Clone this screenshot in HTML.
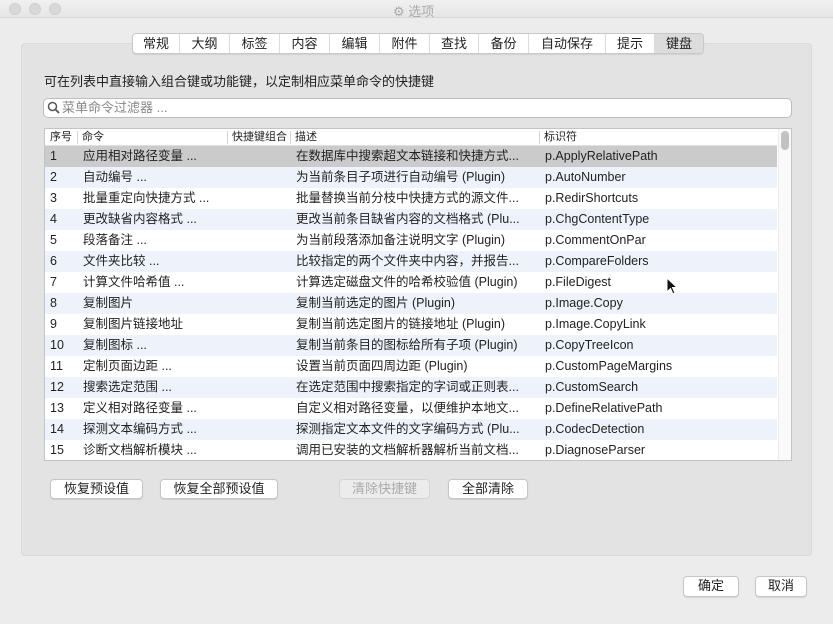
<!DOCTYPE html>
<html><head><meta charset="utf-8"><style>
*{box-sizing:border-box;margin:0;padding:0}
body{width:833px;height:624px;background:#ececec;font-family:"Liberation Sans","Noto Sans CJK SC",sans-serif;font-size:12.5px;color:#222;position:relative;overflow:hidden}
.abs{position:absolute}
.title{left:0;top:0;width:833px;height:18px;background:linear-gradient(#f0f0f0,#e6e6e6);border-bottom:1px solid #d6d6d6}
.dot{width:12px;height:12px;border-radius:50%;background:#d8d8d8;border:1px solid #cfcfcf;top:3px}
.group{left:21px;top:43px;width:791px;height:513px;background:#e3e3e3;border:1px solid #dadada;border-radius:4px}
.tabs{left:132px;top:33px;height:21px;display:flex;background:#fff;border:1px solid #c8c8c8;border-radius:4px;overflow:hidden;box-shadow:0 1px 1px rgba(0,0,0,.08)}
.tabs div{height:19px;line-height:19px;text-align:center;border-right:1px solid #dcdcdc;font-size:13px}
.tabs div:last-child{border-right:none;background:#dcdcdc}
.search{left:43px;top:98px;width:749px;height:20px;background:#fff;border:1px solid #bdbdbd;border-radius:5px;color:#888;font-size:13px;line-height:18px;padding-left:18px}
.table{left:44px;top:128px;width:748px;height:333px;background:#fff;border:1px solid #c4c4c4;overflow:hidden}
.hdr{position:absolute;left:0;top:0;width:732px;height:17px;font-size:11px;line-height:17px;border-bottom:1px solid #e0e0e0}
.hdr span{position:absolute;top:0}
.sep{position:absolute;top:2px;width:1px;height:13px;background:#d4d4d4}
.row{position:absolute;left:0;width:732px;height:21px;line-height:21px;font-size:12.5px}
.row span{position:absolute;top:0;white-space:nowrap}
.sb{left:733px;top:0;width:14px;height:333px;background:#fafafa;border-left:1px solid #ececec}
.thumb{left:736px;top:2px;width:8px;height:19px;border-radius:4px;background:#c2c2c2}
.btn{height:20px;background:#fff;border:1px solid #c6c6c6;border-radius:4px;text-align:center;line-height:18px;font-size:13px;box-shadow:0 1px 1px rgba(0,0,0,.1)}
</style></head><body>
<div class="abs title"></div>
<div class="abs dot" style="left:9px"></div><div class="abs dot" style="left:29px"></div><div class="abs dot" style="left:49px"></div>
<div class="abs" style="left:393px;top:1px;font-size:13px;color:#aaa">⚙ 选项</div>
<div class="abs group"></div>
<div class="abs tabs">
<div style="width:47px">常规</div><div style="width:50px">大纲</div><div style="width:50px">标签</div><div style="width:50px">内容</div><div style="width:50px">编辑</div><div style="width:50px">附件</div><div style="width:49px">查找</div><div style="width:50px">备份</div><div style="width:77px">自动保存</div><div style="width:49px">提示</div><div style="width:48px">键盘</div>
</div>
<div class="abs" style="left:44px;top:71px;font-size:13px">可在列表中直接输入组合键或功能键，以定制相应菜单命令的快捷键</div>
<div class="abs search">菜单命令过滤器 ...</div>
<svg class="abs" style="left:47px;top:101px" width="14" height="14"><circle cx="5.5" cy="5.5" r="4" fill="none" stroke="#555" stroke-width="1.5"/><path d="M8.5 8.5L12 12" stroke="#555" stroke-width="1.8"/></svg>
<div class="abs table">
<div class="hdr"><span style="left:5px">序号</span><div class="sep" style="left:32px"></div><span style="left:37px">命令</span><div class="sep" style="left:182px"></div><span style="left:187px">快捷键组合</span><div class="sep" style="left:245px"></div><span style="left:250px">描述</span><div class="sep" style="left:494px"></div><span style="left:499px">标识符</span></div>
<div id="rows"></div>
<div class="abs sb"></div><div class="abs thumb"></div>
</div>
<div class="abs btn" style="left:50px;top:479px;width:93px">恢复预设值</div>
<div class="abs btn" style="left:160px;top:479px;width:118px">恢复全部预设值</div>
<div class="abs btn" style="left:339px;top:479px;width:91px;background:#ececec;color:#aaa;box-shadow:none;border-color:#d4d4d4">清除快捷键</div>
<div class="abs btn" style="left:448px;top:479px;width:80px">全部清除</div>
<div class="abs btn" style="left:683px;top:576px;width:56px;height:21px">确定</div>
<div class="abs btn" style="left:755px;top:576px;width:52px;height:21px">取消</div>
<svg class="abs" style="left:666px;top:277px" width="12" height="19"><path d="M1 1L1 15L4.5 11.5L7 17L9 16L6.5 10.5L11 10.5Z" fill="#111" stroke="#fff" stroke-width="1"/></svg>
<script>
var d=[["应用相对路径变量 ...","在数据库中搜索超文本链接和快捷方式...","p.ApplyRelativePath"],
["自动编号 ...","为当前条目子项进行自动编号 (Plugin)","p.AutoNumber"],
["批量重定向快捷方式 ...","批量替换当前分枝中快捷方式的源文件...","p.RedirShortcuts"],
["更改缺省内容格式 ...","更改当前条目缺省内容的文档格式 (Plu...","p.ChgContentType"],
["段落备注 ...","为当前段落添加备注说明文字 (Plugin)","p.CommentOnPar"],
["文件夹比较 ...","比较指定的两个文件夹中内容，并报告...","p.CompareFolders"],
["计算文件哈希值 ...","计算选定磁盘文件的哈希校验值 (Plugin)","p.FileDigest"],
["复制图片","复制当前选定的图片 (Plugin)","p.Image.Copy"],
["复制图片链接地址","复制当前选定图片的链接地址 (Plugin)","p.Image.CopyLink"],
["复制图标 ...","复制当前条目的图标给所有子项 (Plugin)","p.CopyTreeIcon"],
["定制页面边距 ...","设置当前页面四周边距 (Plugin)","p.CustomPageMargins"],
["搜索选定范围 ...","在选定范围中搜索指定的字词或正则表...","p.CustomSearch"],
["定义相对路径变量 ...","自定义相对路径变量，以便维护本地文...","p.DefineRelativePath"],
["探测文本编码方式 ...","探测指定文本文件的文字编码方式 (Plu...","p.CodecDetection"],
["诊断文档解析模块 ...","调用已安装的文档解析器解析当前文档...","p.DiagnoseParser"]];
var h="";d.forEach(function(r,i){var bg=i==0?"#cbcbcb":(i%2?"#eef3fb":"#fff");
h+='<div class="row" style="top:'+(17+i*21)+'px;background:'+bg+'"><span style="left:5px">'+(i+1)+'</span><span style="left:38px">'+r[0]+'</span><span style="left:251px">'+r[1]+'</span><span style="left:500px">'+r[2]+'</span></div>';});
document.getElementById("rows").innerHTML=h;
</script>
</body></html>
